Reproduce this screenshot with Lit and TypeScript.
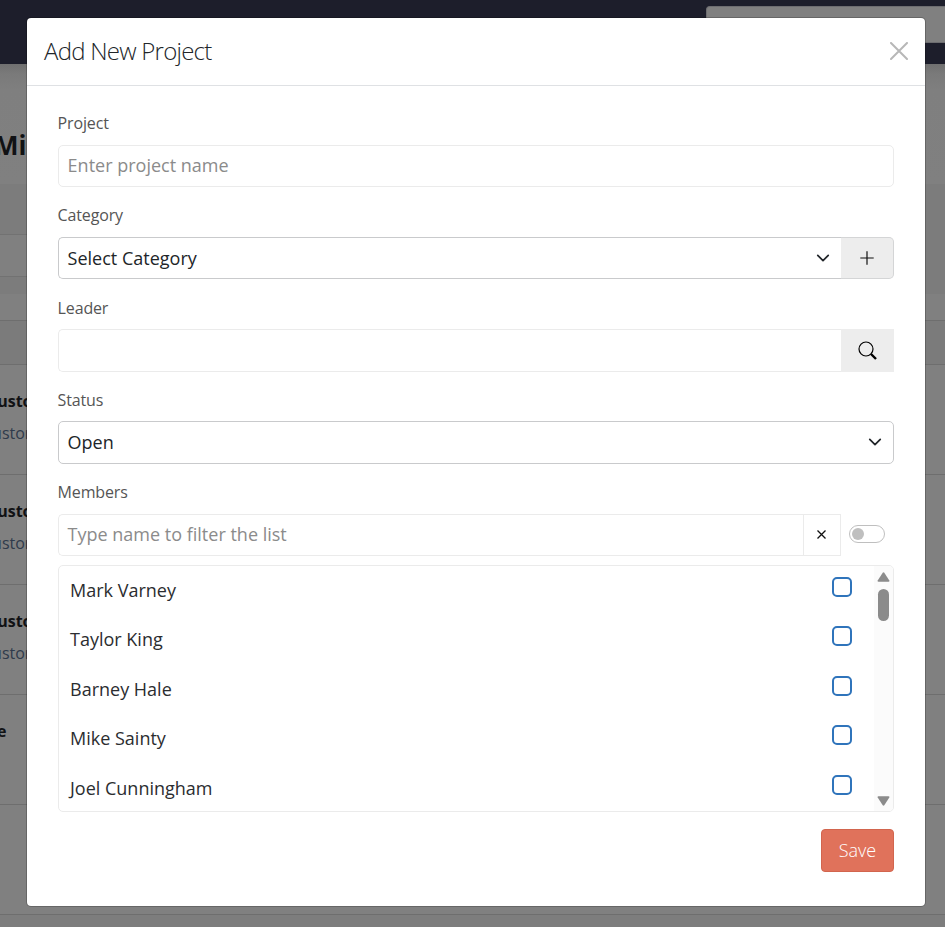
import { LitElement, html, css } from "lit";
import { customElement, property, state } from "lit/decorators.js";

const chevron = html`<svg class="chevron" width="14" height="14" viewBox="0 0 16 16" fill="none" stroke="#212529" stroke-width="2" stroke-linecap="round" stroke-linejoin="round">
  <path d="m2 5 6 6 6-6"></path>
</svg>`;

@customElement("page-behind")
class PageBehind extends LitElement {
  static styles = css`
    :host { display: block; height: 927px; background: #808080; overflow: hidden; }
    .nav { height: 64px; box-sizing: border-box; padding: 6px 0 0 706px; background: #1d1e2b; }
    .search { height: 37px; box-sizing: border-box; border: 1px solid #6d6d70; border-radius: 4px 0 0 4px; border-right: 0; background: #808080; }
    .heading { height: 120px; box-sizing: border-box; padding-top: 61px; background: linear-gradient(#707070, #7a7a7a 10px, #7f7f7f 26px, #808080); }
    .heading h1 { margin: 0 0 0 -6px; font-size: 26px; line-height: 40px; font-weight: 700; color: #111214; }
    .band { height: 110px; box-sizing: border-box; padding-top: 50px; background: #7c7c7c; }
    .bar { box-sizing: border-box; border-top: 1px solid #727272; width: 60px; height: 42px; background: #808080; }
    .bar.shade { height: 18px; background: #7c7c7c; }
    .gap { height: 26px; }
    .head { box-sizing: border-box; height: 44px; border-top: 1px solid #6e6e6e; background: #7b7b7b; }
    .row { box-sizing: border-box; height: 110px; border-top: 1px solid #6e6e6e; padding-top: 24px; white-space: nowrap; }
    .name { font-size: 16px; line-height: 24px; font-weight: 700; color: #111214; margin-left: -13px; }
    .sub { font-size: 16px; line-height: 24px; margin: 8px 0 0 -18px; color: #2f3a4b; }
    .last .name { margin-left: -3px; }
    .foot { border-top: 1px solid #6e6e6e; height: 12px; background: #7d7d7d; }
  `;
  render() {
    return html`
      <div class="nav"><div class="search"></div></div>
      <div class="heading"><h1>Mi</h1></div>
      <div class="band"><div class="bar"></div><div class="bar shade"></div></div>
      <div class="gap"></div>
      <div class="head"></div>
      ${[0, 1, 2].map(() => html`<div class="row"><div class="name">Custom</div><div class="sub">Custom</div></div>`)}
      <div class="row last"><div class="name">e</div></div>
      <div class="row"></div>
      <div class="foot"></div>`;
  }
}

@customElement("form-field")
class FormField extends LitElement {
  @property() label = "";
  static styles = css`
    :host { display: block; height: 92.2px; }
    .label { box-sizing: border-box; padding-top: .2px; font-size: 16px; line-height: 24px; height: 33.8px; color: #555; letter-spacing: -.15px; margin-left: -.4px; }
    .control { display: flex; height: 42.4px; }
  `;
  render() {
    return html`<div class="label">${this.label}</div><div class="control"><slot></slot></div>`;
  }
}

@customElement("app-root")
class AppRoot extends LitElement {
  @state() members = ["Mark Varney", "Taylor King", "Barney Hale", "Mike Sainty", "Joel Cunningham"];

  static styles = css`
    :host { display: block; position: relative; height: 927px; overflow: hidden; font-family: "Open Sans", "Noto Sans", sans-serif; }
    .modal { position: absolute; top: 17px; left: 26px; width: 900px; height: 890px; box-sizing: border-box; border: 1px solid rgba(0, 0, 0, .2); border-radius: 5px; background: #fff; background-clip: padding-box; }
    header { display: flex; justify-content: space-between; align-items: center; height: 68px; box-sizing: border-box; padding: 0 17px 2px; border-bottom: 1px solid #dfe1e4; }
    h2 { margin: 0; font-size: 24px; font-weight: 300; line-height: 36px; letter-spacing: -.75px; color: #212529; }
    .close { display: block; }
    .body { padding: 25px 31px; }
    .input { flex: 1; display: flex; align-items: center; justify-content: space-between; box-sizing: border-box; padding: 0 11px 1.6px 8.6px; border: 1px solid #ebebeb; border-radius: 5px; font-size: 18px; color: #212529; }
    .hint { color: #8b8b8b; }
    .select { border-color: #c9cacc; padding-bottom: 0; }
    .status { padding-bottom: 1px; }
    .joined { border-radius: 5px 0 0 5px; border-right: 0; }
    .addon { display: flex; align-items: center; justify-content: center; box-sizing: border-box; width: 53px; background: #ededed; border: 1px solid #ededed; }
    .add { border-color: #d4d5d6; border-left: 0; border-radius: 0 5px 5px 0; }
    .clear { width: 38px; background: #fff; border-color: #ebebeb; padding-right: 1px; }
    .toggle { box-sizing: border-box; width: 36px; height: 18px; margin: 11px 9px 0 8px; border: 1px solid #bfbfbf; border-radius: 9px; padding: 2px; }
    .knob { width: 12px; height: 12px; border-radius: 50%; background: #bfbfbf; }
    .list { display: flex; box-sizing: border-box; height: 247px; margin-top: -7.2px; border: 1px solid #ebebeb; border-radius: 5px; overflow: hidden; }
    .people { flex: 1; }
    .person { display: flex; justify-content: space-between; height: 49.5px; padding: 11px 22px 0 11px; box-sizing: border-box; font-size: 18px; line-height: 27px; color: #2b2d30; }
    .check { width: 20px; height: 20px; box-sizing: border-box; border: 2px solid #2f74bb; border-radius: 5px; }
    .scroll { display: flex; flex-direction: column; align-items: center; width: 19px; padding: 6px 0 5px; box-sizing: border-box; background: #fbfbfb; }
    .thumb { width: 11px; height: 32px; margin-top: 7px; border-radius: 6px; background: #8b8b8b; }
    .down { margin-top: auto; }
    .actions { display: flex; justify-content: flex-end; margin-top: 17.2px; }
    .save { display: flex; align-items: center; justify-content: center; box-sizing: border-box; width: 73px; height: 43px; padding-bottom: 1px; border: 1px solid #d2654e; border-radius: 4px; background: #e0725b; color: #fff; font-size: 18px; font-weight: 300; }
  `;

  render() {
    return html`
      <page-behind></page-behind>
      <section class="modal">
        <header>
          <h2>Add New Project</h2>
          <svg class="close" width="18" height="18" viewBox="0 0 18 18" stroke="#b7b7b7" stroke-width="2" stroke-linecap="round"><path d="M1 1 17 17M17 1 1 17"></path></svg>
        </header>
        <div class="body">
          <form-field label="Project"><div class="input hint">Enter project name</div></form-field>
          <form-field label="Category">
            <div class="input select joined">Select Category${chevron}</div>
            <div class="addon add"><svg width="14" height="14" viewBox="0 0 14 14" stroke="#111" stroke-width="1.2"><path d="M7 .3v13.4M.3 7h13.4"></path></svg></div>
          </form-field>
          <form-field label="Leader">
            <div class="input joined"></div>
            <div class="addon"><svg width="19" height="19" viewBox="0 0 19 19" fill="none" stroke="#000"><circle cx="8" cy="8" r="7" stroke-width="1.2"></circle><path d="m13 13 5 5" stroke-width="2.4"></path></svg></div>
          </form-field>
          <form-field label="Status"><div class="input select status">Open${chevron}</div></form-field>
          <form-field label="Members">
            <div class="input joined hint">Type name to filter the list</div>
            <div class="addon clear"><svg width="9" height="9" viewBox="0 0 9 9" stroke="#111" stroke-width="1.3"><path d="m.5.5 8 8M8.500.5l-8 8"></path></svg></div>
            <div class="toggle"><div class="knob"></div></div>
          </form-field>
          <div class="list">
            <div class="people">
              ${this.members.map((name) => html`<div class="person"><span>${name}</span><span class="check"></span></div>`)}
            </div>
            <div class="scroll">
              <svg width="13" height="10" viewBox="0 0 13 10" fill="#8b8b8b"><path d="M5.700.7Q6.500 0 7.300.7L12.300 8.500Q12.700 9.700 11.500 9.700H1.500Q.3 9.700.7 8.500Z"></path></svg>
              <div class="thumb"></div>
              <svg class="down" width="13" height="10" viewBox="0 0 13 10" fill="#8b8b8b"><path d="M5.700 9.300Q6.500 10 7.300 9.300L12.300 1.500Q12.700.3 11.500.3H1.500Q.3.3.7 1.500Z"></path></svg>
            </div>
          </div>
          <div class="actions"><div class="save">Save</div></div>
        </div>
      </section>`;
  }
}
